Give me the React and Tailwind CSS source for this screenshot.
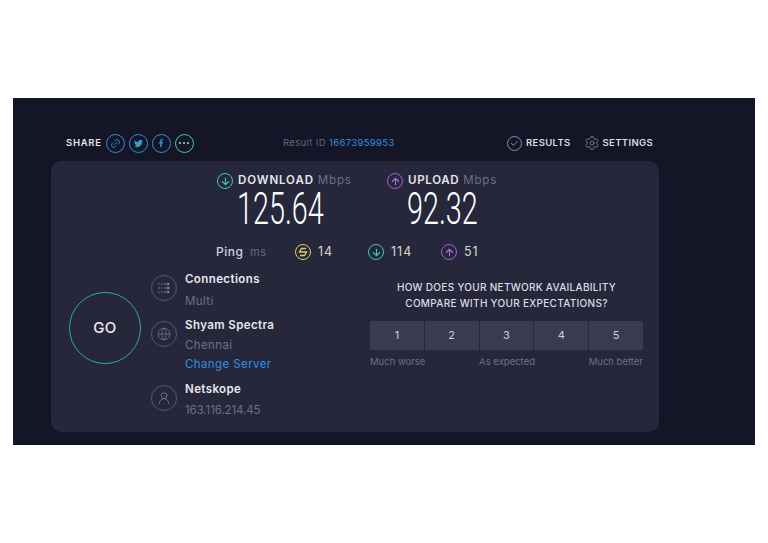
import { ArrowDown, ArrowUp, Link2, Settings, Globe, UserRound, Check } from "lucide-react";
import { FaTwitter, FaFacebookF } from "react-icons/fa";

const font = "font-['Inter','Open_Sans',sans-serif]";

function Ring({ size = "w-[16px] h-[16px]", color, children }) {
  return (
    <span className={`${size} ${color} shrink-0 rounded-full border-[1.5px] flex items-center justify-center`}>
      {children}
    </span>
  );
}

function ShareIcon({ color, children }) {
  return <Ring size="w-[19px] h-[19px] border-2" color={color}>{children}</Ring>;
}

function StatIcon({ kind }) {
  if (kind === "down") {
    return (
      <Ring color="border-[#3ec9bc] text-[#3ec9bc]">
        <ArrowDown size={11} strokeWidth={2.4} />
      </Ring>
    );
  }
  if (kind === "up") {
    return (
      <Ring color="border-[#a45fdc] text-[#b070e4]">
        <ArrowUp size={11} strokeWidth={2.4} />
      </Ring>
    );
  }
  return (
    <Ring color="border-[#e2cc6a] text-[#e2cc6a]">
      <svg width="10" height="10" viewBox="0 0 10 10" fill="none" stroke="currentColor" strokeWidth="1.3">
        <path d="M8 1.5H3.5L1.5 5h7L6.5 8.5H2" />
      </svg>
    </Ring>
  );
}

function Speed({ icon, label, value, className, tracking }) {
  return (
    <div className={className}>
      <div className="flex items-center h-[16px] text-[11.5px] leading-none">
        <StatIcon kind={icon} />
        <span className={`ml-[5px] font-semibold text-[#e6e6ea] ${tracking}`}>{label}</span>
        <span className="ml-[4px] text-[#6e6f85] tracking-[0.8px]">Mbps</span>
      </div>
      <div className="ml-[20px] h-[40px] origin-left scale-x-[0.64] whitespace-nowrap font-['Roboto',sans-serif] font-light text-[45px] leading-[40px] text-white">
        {value}
      </div>
    </div>
  );
}

function PingValue({ icon, value, className }) {
  return (
    <div className={`flex items-center ${className}`}>
      <StatIcon kind={icon} />
      <span className="ml-[7px] text-[12.5px] tracking-[1px] text-[#d8d8c8]">{value}</span>
    </div>
  );
}

function InfoRow({ icon, title, lines, className }) {
  return (
    <div className={`flex ${className}`}>
      <span className="mt-[6px] w-[26px] h-[26px] shrink-0 rounded-full border border-[#55566a] text-[#8a8b9c] flex items-center justify-center">
        {icon}
      </span>
      <div className="ml-[8px] text-[11.5px] leading-[20px] tracking-[0.4px]">
        <div className="font-semibold text-[#e8e8ee] whitespace-nowrap">{title}</div>
        {lines.map((l) => (
          <div key={l.text} className={`${l.color} whitespace-nowrap`}>{l.text}</div>
        ))}
      </div>
    </div>
  );
}

export default function App() {
  return (
    <div className={`w-[768px] h-[543px] bg-white pt-[98px] pl-[13px] overflow-hidden ${font}`}>
      <div className="w-[742px] h-[347px] bg-[#141526] pl-[38px] pt-[35px]">
        {/* top bar */}
        <div className="w-[608px] h-[28px] flex items-center pl-[15px] pr-[6px] pb-[8px]">
          <div className="flex items-center w-[217px] h-[19px]">
            <span className="text-[9.5px] font-semibold tracking-[0.7px] text-[#e6e6ea] mr-[4px]">SHARE</span>
            <div className="flex gap-[4px]">
              <ShareIcon color="border-[#2b93c9] text-[#2b93c9]"><Link2 size={11} className="-rotate-45" /></ShareIcon>
              <ShareIcon color="border-[#2b93c9] text-[#2ba3d9]"><FaTwitter size={9} /></ShareIcon>
              <ShareIcon color="border-[#2b93c9] text-[#2b93c9]"><FaFacebookF size={8} /></ShareIcon>
              <ShareIcon color="border-[#3ec9b0] text-[#a5e6d8]">
                <span className="flex gap-[2px]">
                  <span className="w-[2px] h-[2px] rounded-full bg-current" />
                  <span className="w-[2px] h-[2px] rounded-full bg-current" />
                  <span className="w-[2px] h-[2px] rounded-full bg-current" />
                </span>
              </ShareIcon>
            </div>
          </div>
          <div className="h-[19px] flex items-center text-[9.5px] whitespace-nowrap">
            <span className="text-[#65667c] tracking-[0.35px]">Result ID</span>
            <span className="ml-[3px] text-[#2f8fe0] tracking-[0.35px]">16673959953</span>
          </div>
          <div className="ml-auto h-[19px] flex items-center text-[9.5px] font-semibold tracking-[0.35px] text-[#dcdce2]">
            <Ring size="w-[15px] h-[15px]" color="border-[#8a8b9c] border text-[#a0a1b0]"><Check size={9} /></Ring>
            <span className="ml-[4px]">RESULTS</span>
            <Settings size={16} strokeWidth={1.2} className="ml-[13px] text-[#8a8b9c]" />
            <span className="ml-[3px]">SETTINGS</span>
          </div>
        </div>

        {/* panel */}
        <div className="w-[608px] h-[271px] rounded-[10px] bg-[#26273b] pt-[12px]">
          <div className="flex pl-[166px]">
            <Speed icon="down" label="DOWNLOAD" value="125.64" className="w-[170px]" tracking="tracking-[0.9px]" />
            <Speed icon="up" label="UPLOAD" value="92.32" tracking="tracking-[0.7px]" />
          </div>

          <div className="flex items-center h-[16px] mt-[15px] pl-[165px]">
            <span className="w-[79px] text-[12px] tracking-[0.5px] text-[#d2d2da] font-medium">
              Ping <span className="ml-[3px] font-normal text-[11px] text-[#65667c]">ms</span>
            </span>
            <PingValue icon="ping" value="14" className="w-[73px]" />
            <PingValue icon="down" value="114" className="w-[73px]" />
            <PingValue icon="up" value="51" />
          </div>

          <div className="flex mt-[9px]">
            <div className="ml-[18px] mt-[23px] w-[72px] h-[72px] shrink-0 rounded-full border border-[#2aa9b0] flex items-center justify-center text-[15px] font-medium tracking-[0.5px] text-[#ececf0]">
              GO
            </div>
            <div className="ml-[10px] w-[200px]">
              <InfoRow
                title="Connections"
                lines={[{ text: "Multi", color: "text-[#6e6f85] mt-[2px]" }]}
                icon={
                  <svg width="14" height="12" viewBox="0 0 14 12" fill="none" stroke="currentColor" strokeWidth="0.9">
                    <path d="M1 2h1.5M4 2h1.5M7 2h5M10.5 .8 12.5 2l-2 1.2M1 6h1.5M4 6h1.5M7 6h5M10.5 4.8 12.5 6l-2 1.2M1 10h1.5M4 10h1.5M7 10h5M10.5 8.8 12.5 10l-2 1.2" />
                  </svg>
                }
              />
              <InfoRow
                className="mt-[4px]"
                title="Shyam Spectra"
                lines={[
                  { text: "Chennai", color: "text-[#6e6f85]" },
                  { text: "Change Server", color: "text-[#2f8fe0] -mt-[1px]" },
                ]}
                icon={<Globe size={14} strokeWidth={1} />}
              />
              <InfoRow
                className="mt-[5px]"
                title="Netskope"
                lines={[{ text: "163.116.214.45", color: "text-[#6e6f85] mt-[1px] tracking-[-0.1px]" }]}
                icon={<UserRound size={14} strokeWidth={1.2} />}
              />
            </div>
            <div className="ml-[19px] w-[273px] pt-[10px]">
              <div className="text-center text-[10px] font-medium leading-[16px] tracking-[0.3px] text-[#dcdce2] whitespace-nowrap">
                <div>HOW DOES YOUR NETWORK AVAILABILITY</div>
                <div>COMPARE WITH YOUR EXPECTATIONS?</div>
              </div>
              <div className="mt-[10px] h-[29px] flex gap-[1px] rounded-[2px] overflow-hidden">
                {[1, 2, 3, 4, 5].map((n) => (
                  <div key={n} className="flex-1 bg-[#3a3b50] flex items-center justify-center text-[11px] text-[#d0d0d8]">
                    {n}
                  </div>
                ))}
              </div>
              <div className="mt-[5px] flex justify-between text-[9.5px] text-[#6e6f85]">
                <span>Much worse</span>
                <span>As expected</span>
                <span>Much better</span>
              </div>
            </div>
          </div>
        </div>
      </div>
    </div>
  );
}
